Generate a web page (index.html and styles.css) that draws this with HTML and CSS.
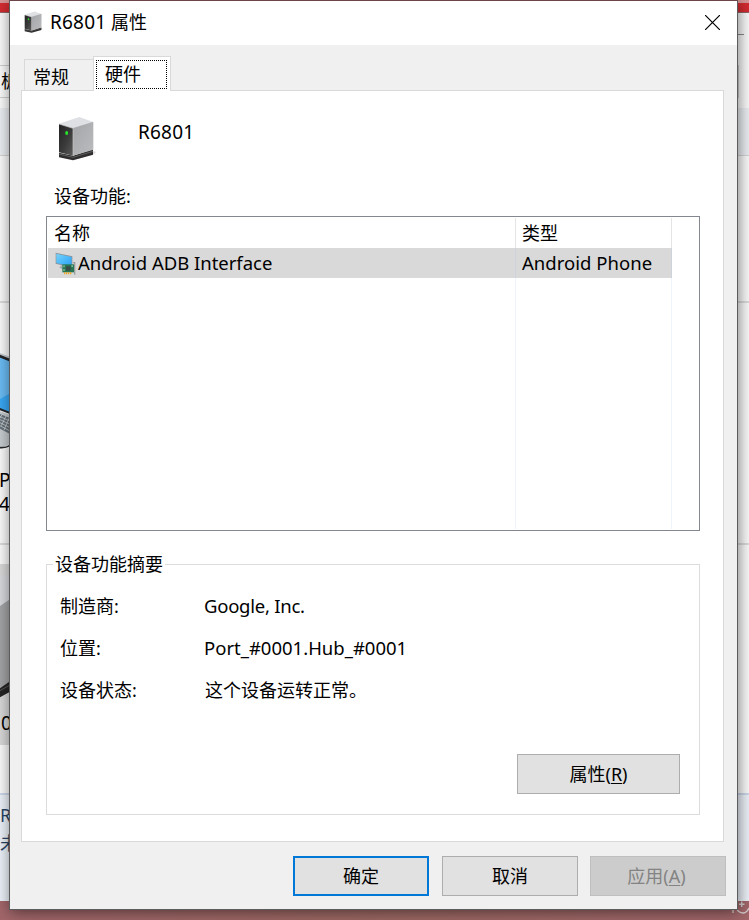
FILE: index.html
```html
<!DOCTYPE html>
<html lang="zh-CN">
<head>
<meta charset="utf-8">
<title>R6801 属性</title>
<link rel="stylesheet" href="styles.css">
</head>
<body>
<svg class="defs" width="0" height="0" aria-hidden="true">
  <defs>
    <linearGradient id="front" x1="0" y1="0" x2="1" y2="1"><stop offset="0" stop-color="#222"/><stop offset=".55" stop-color="#3b3b3b"/><stop offset="1" stop-color="#5c5c5c"/></linearGradient>
    <linearGradient id="side" x1="0" y1="0" x2="1" y2="1"><stop offset="0" stop-color="#a4a5a8"/><stop offset="1" stop-color="#bbbcbe"/></linearGradient>
    <linearGradient id="screen" x1="0" y1="0" x2="1" y2="1"><stop offset="0" stop-color="#79d2f7"/><stop offset=".5" stop-color="#4dbafa"/><stop offset="1" stop-color="#299df0"/></linearGradient>
    <symbol id="server" viewBox="174 347 114 135">
      <path d="M219 480 280 463 288 455 280 452Z" fill="#ddd"/>
      <path d="M177 457 219 466 279 447V463L219 480 177 471Z" fill="#302e2e"/>
      <path d="M177 461 219 471 279 453" fill="none" stroke="#777" stroke-width="2"/>
      <path d="M177 370 238 350 280 365 219 384Z" fill="#dfe0e4"/>
      <path d="M219 383 280 364V448L219 466Z" fill="url(#side)"/>
      <path d="M177 371 219 384V466L177 456Z" fill="url(#front)"/>
      <path d="M177 371 219 384V466" fill="none" stroke="#c9c9ca" stroke-width="2"/>
      <ellipse cx="200" cy="398" rx="4.5" ry="6" fill="#26e32b"/>
    </symbol>
  </defs>
</svg>
<div class="desktop">
  <div class="glass"></div>
  <div class="redbar"></div>
  <div class="menu"></div>
  <div class="address"><span>板</span></div>
  <div class="gap"></div>
  <div class="toolbar"></div>
  <div class="pane"></div>
  <div class="devices">
    <svg class="laptop" width="10" height="120" viewBox="0 0 30 360">
      <path d="M0 69 30 80V90L0 80Z" fill="#c5cbd0"/>
      <path d="M0 74 30 86V252L0 241Z" fill="#252629"/>
      <path d="M0 83 30 95V246L0 234Z" fill="#39a9f5"/>
      <path d="M0 83 30 95V190L0 207Z" fill="#6bbcf5"/>
      <path d="M0 244 30 254V340Q22 350 0 350Z" fill="#c7ccd0"/>
      <path d="M0 252 30 264V312L0 296Z" fill="#68737b"/>
      <path d="M0 260 30 273M0 269 30 283M0 278 30 293M0 287 30 303M6 254 0 264M18 258 4 287M28 263 12 300" stroke="#dfe4e7" stroke-width="2"/>
      <path d="M0 353Q20 354 30 346" stroke="#26282a" stroke-width="5" fill="none"/>
    </svg>
    <span>P</span><span>4</span>
  </div>
  <div class="section"></div>
  <div class="selected">
    <svg width="10" height="144" viewBox="0 0 30 432">
      <path d="M0 33Q20 34 30 42V110L0 130Z" fill="#d8dade"/>
      <path d="M0 126 30 106V361L0 374Z" fill="#a3a4a5"/>
      <path d="M0 373 30 352V383L0 400Z" fill="#262425"/>
      <path d="M0 380 30 363" stroke="#57585a" stroke-width="3"/>
    </svg>
    <span>0</span>
  </div>
  <div class="blank"></div>
  <div class="status"><span>R</span><span>未</span></div>
  <div class="wall"><svg width="18" height="19" viewBox="0 0 18 19" fill="none" stroke="#d5cdcd" stroke-width="1.4"><path d="M10.7 .5V6M8 3.2H13.5M5 7Q8 12.3 12.5 12 16 11.5 18 7M2 5V12"/></svg></div>
</div>

<div class="dialog">
  <header class="titlebar">
    <svg class="title-icon"><use href="#server"/></svg>
    <h1><span class="model">R6801</span> 属性</h1>
    <svg class="close" width="15" height="15" viewBox="0 0 15 15"><path d="M0 0 15 15M15 0 0 15" stroke="#000" stroke-width="1.2"/></svg>
  </header>
  <nav class="tabs">
    <div class="tab">常规</div>
    <div class="tab active"><span>硬件</span></div>
  </nav>
  <main class="page">
    <div class="device"><svg class="device-icon"><use href="#server"/></svg><span class="model">R6801</span></div>
    <div class="label">设备功能:</div>
    <div class="list">
      <div class="row head"><div>名称</div><div>类型</div></div>
      <div class="row item">
        <div>
          <svg width="21" height="23" viewBox="165 158 63 69">
            <path d="M184 196 190 211 178 205Z" fill="#a7adb3"/>
            <path d="M167 160 217 171V205L167 193Z" fill="#8b9299"/>
            <path d="M169 163 215 173V202L169 191Z" fill="url(#screen)"/>
            <path d="M219 188H226V226H222V192H219Z" fill="#9b9d9e"/>
            <path d="M187 195H222V219H187Z" fill="#267653"/>
            <path d="M190 198H194V204H190ZM190 209H194V215H190ZM214 198H219V203H214Z" fill="#85ba96"/>
            <path d="M198 201H212V214H198Z" fill="#394c48"/>
            <path d="M192 219H196V225H192ZM198 219H202V225H198ZM204 219H208V225H204ZM210 219H214V225H210Z" fill="#efa626"/>
          </svg><span class="adb">Android ADB Interface</span>
        </div>
        <div class="phone">Android Phone</div>
      </div>
      <div class="row rest"><div></div><div></div></div>
    </div>
    <section class="summary">
      <h2>设备功能摘要</h2>
      <dl>
        <dt>制造商:</dt><dd class="maker">Google, Inc.</dd>
        <dt>位置:</dt><dd class="port">Port_#0001.Hub_#0001</dd>
        <dt>设备状态:</dt><dd class="state">这个设备运转正常。</dd>
      </dl>
      <button class="props">属性(<u>R</u>)</button>
    </section>
  </main>
  <footer>
    <button class="ok">确定</button>
    <button>取消</button>
    <button class="apply" disabled>应用(<u>A</u>)</button>
  </footer>
</div>
</body>
</html>
```
FILE: styles.css
```css
* { box-sizing: border-box; }
body {
  margin: 0; width: 749px; height: 920px; overflow: hidden; position: relative;
  font: 18px/24px "Noto Sans", "Noto Sans CJK SC", sans-serif; color: #000;
}
svg { display: block; flex: none; }
.defs { position: absolute; }

/* windows behind the dialog */
.desktop { height: 920px; display: flex; flex-direction: column; background: #fbfbfb; }
.desktop > div { flex: none; overflow: hidden; }
.desktop span { display: block; width: 20px; }
.glass { height: 3px; background: #d79797; }
.redbar { height: 10px; background: #d42c31; border-bottom: 1px solid #8f6666; }
.menu { height: 52px; background: linear-gradient(#8b8b8b, #8b8b8b) 735px 21px / 9px 1px no-repeat; }
.address { height: 33px; width: 739px; border: 1px solid #d0d0d0; border-left: 0; padding-top: 3px; }
.address span { margin-left: 1px; }
.gap { height: 10px; }
.toolbar { height: 48px; background: #eceff3; border-bottom: 1px solid #d5d5d5; }
.pane { height: 147px; border-bottom: 2px solid #dcdcdc; }
.devices { height: 242px; padding-top: 27px; border-bottom: 2px solid #dcdcdc; }
.laptop { margin-bottom: 18px; }
.devices span { height: 24px; margin-left: -1px; font-size: 19px; }
.section { height: 19px; }
.selected { width: 100px; height: 181px; background: #d9d9d9; }
.selected span { margin: 3px 0 0 1px; font-size: 19px; }
.blank { height: 48px; }
.status { height: 108px; background: #edf2fa; border-top: 2px solid #ccd8ea; padding-top: 8px; color: #294466; }
.status span { height: 28px; }
.wall { height: 19px; background: linear-gradient(90deg, #a2666a, #9c6863 50%, #a2666a); display: flex; justify-content: flex-end; }

/* dialog window */
.dialog {
  position: absolute; left: 9px; top: 0; width: 729px; height: 910px;
  border: 1px solid #5c5c5c; border-top-color: #6b4548; background: #f0f0f0;
  box-shadow: 1px 2px 14px rgba(0,0,0,.5); display: flex; flex-direction: column;
}
.titlebar { height: 44px; background: #fff; display: flex; align-items: center; padding: 0 17px 2px 14px; }
.title-icon { width: 19px; height: 22px; margin-right: 7px; }
h1 { margin: 0; font-size: 18px; font-weight: 400; flex: 1; }
.model { font-size: 19px; letter-spacing: .2px; }
.tabs { height: 45px; padding: 11px 0 0 14px; display: flex; align-items: flex-end; }
.tab { width: 69px; height: 31px; border: 1px solid #d9d9d9; border-width: 1px 0 0 1px; padding: 5px 8px; }
.active { width: 78px; height: 35px; margin-bottom: -1px; background: #fff; border-width: 1px 1px 0; padding: 3px 2px; position: relative; }
.active span { display: block; width: 71px; height: 29px; border: 1px dotted #000; padding: 0 8px; line-height: 26px; }
.page { width: 703px; height: 752px; margin-left: 11px; padding: 0 23px 0 24px; border: 1px solid #d9d9d9; background: #fff; display: flex; flex-direction: column; }
.device { height: 93px; padding: 25px 0 0 12px; display: flex; }
.device-icon { width: 38px; height: 45px; }
.device span { margin: 4px 0 0 42px; }
.label { height: 32px; padding-left: 8px; }
.list { height: 315px; border: 1px solid #828790; padding: 1px; display: flex; flex-direction: column; }
.row { width: 624px; display: grid; grid-template-columns: 468px 156px; }
.row > div { border-right: 1px solid #e5e5e5; padding-left: 6px; display: flex; align-items: center; }
.head { height: 30px; }
.item { height: 30px; background: #d9d9d9; font-size: 18.5px; }
.item > div { border-color: #ccd3da; padding-left: 7px; }
.item > .phone { padding-left: 6px; letter-spacing: .03px; }
.rest { flex: 1; }
.rest > div { border-color: #edf4fc; }
.adb { margin-left: 2px; letter-spacing: -.02px; }
.summary { height: 251px; margin-top: 33px; border: 1px solid #dcdcdc; display: flex; flex-direction: column; }
h2 { margin: -13px 0 0 6px; padding: 0 2px; align-self: flex-start; background: #fff; font-size: 18px; font-weight: 400; }
dl { margin: 18px 0 0 13px; display: grid; grid-template-columns: 144px 1fr; grid-auto-rows: 42px; }
dd { margin: 0; }
.maker { font-size: 18.5px; letter-spacing: -.25px; }
.port { font-size: 18.5px; }
.state { padding-left: 1px; }
button { width: 136px; height: 40px; border: 1px solid #adadad; background: #e1e1e1; font: inherit; color: #000; padding: 0; }
.props { width: 163px; margin: 34px 19px 0 auto; }
u { text-decoration-thickness: 1px; text-underline-offset: 2px; }
footer { padding: 14px 11px 0; display: flex; justify-content: flex-end; }
footer button + button { margin-left: 13px; }
.ok { border: 2px solid #0078d7; }
footer .apply { margin-left: 12px; padding-right: 3px; background: #ccc; border-color: #bfbfbf; color: #838383; }
```
